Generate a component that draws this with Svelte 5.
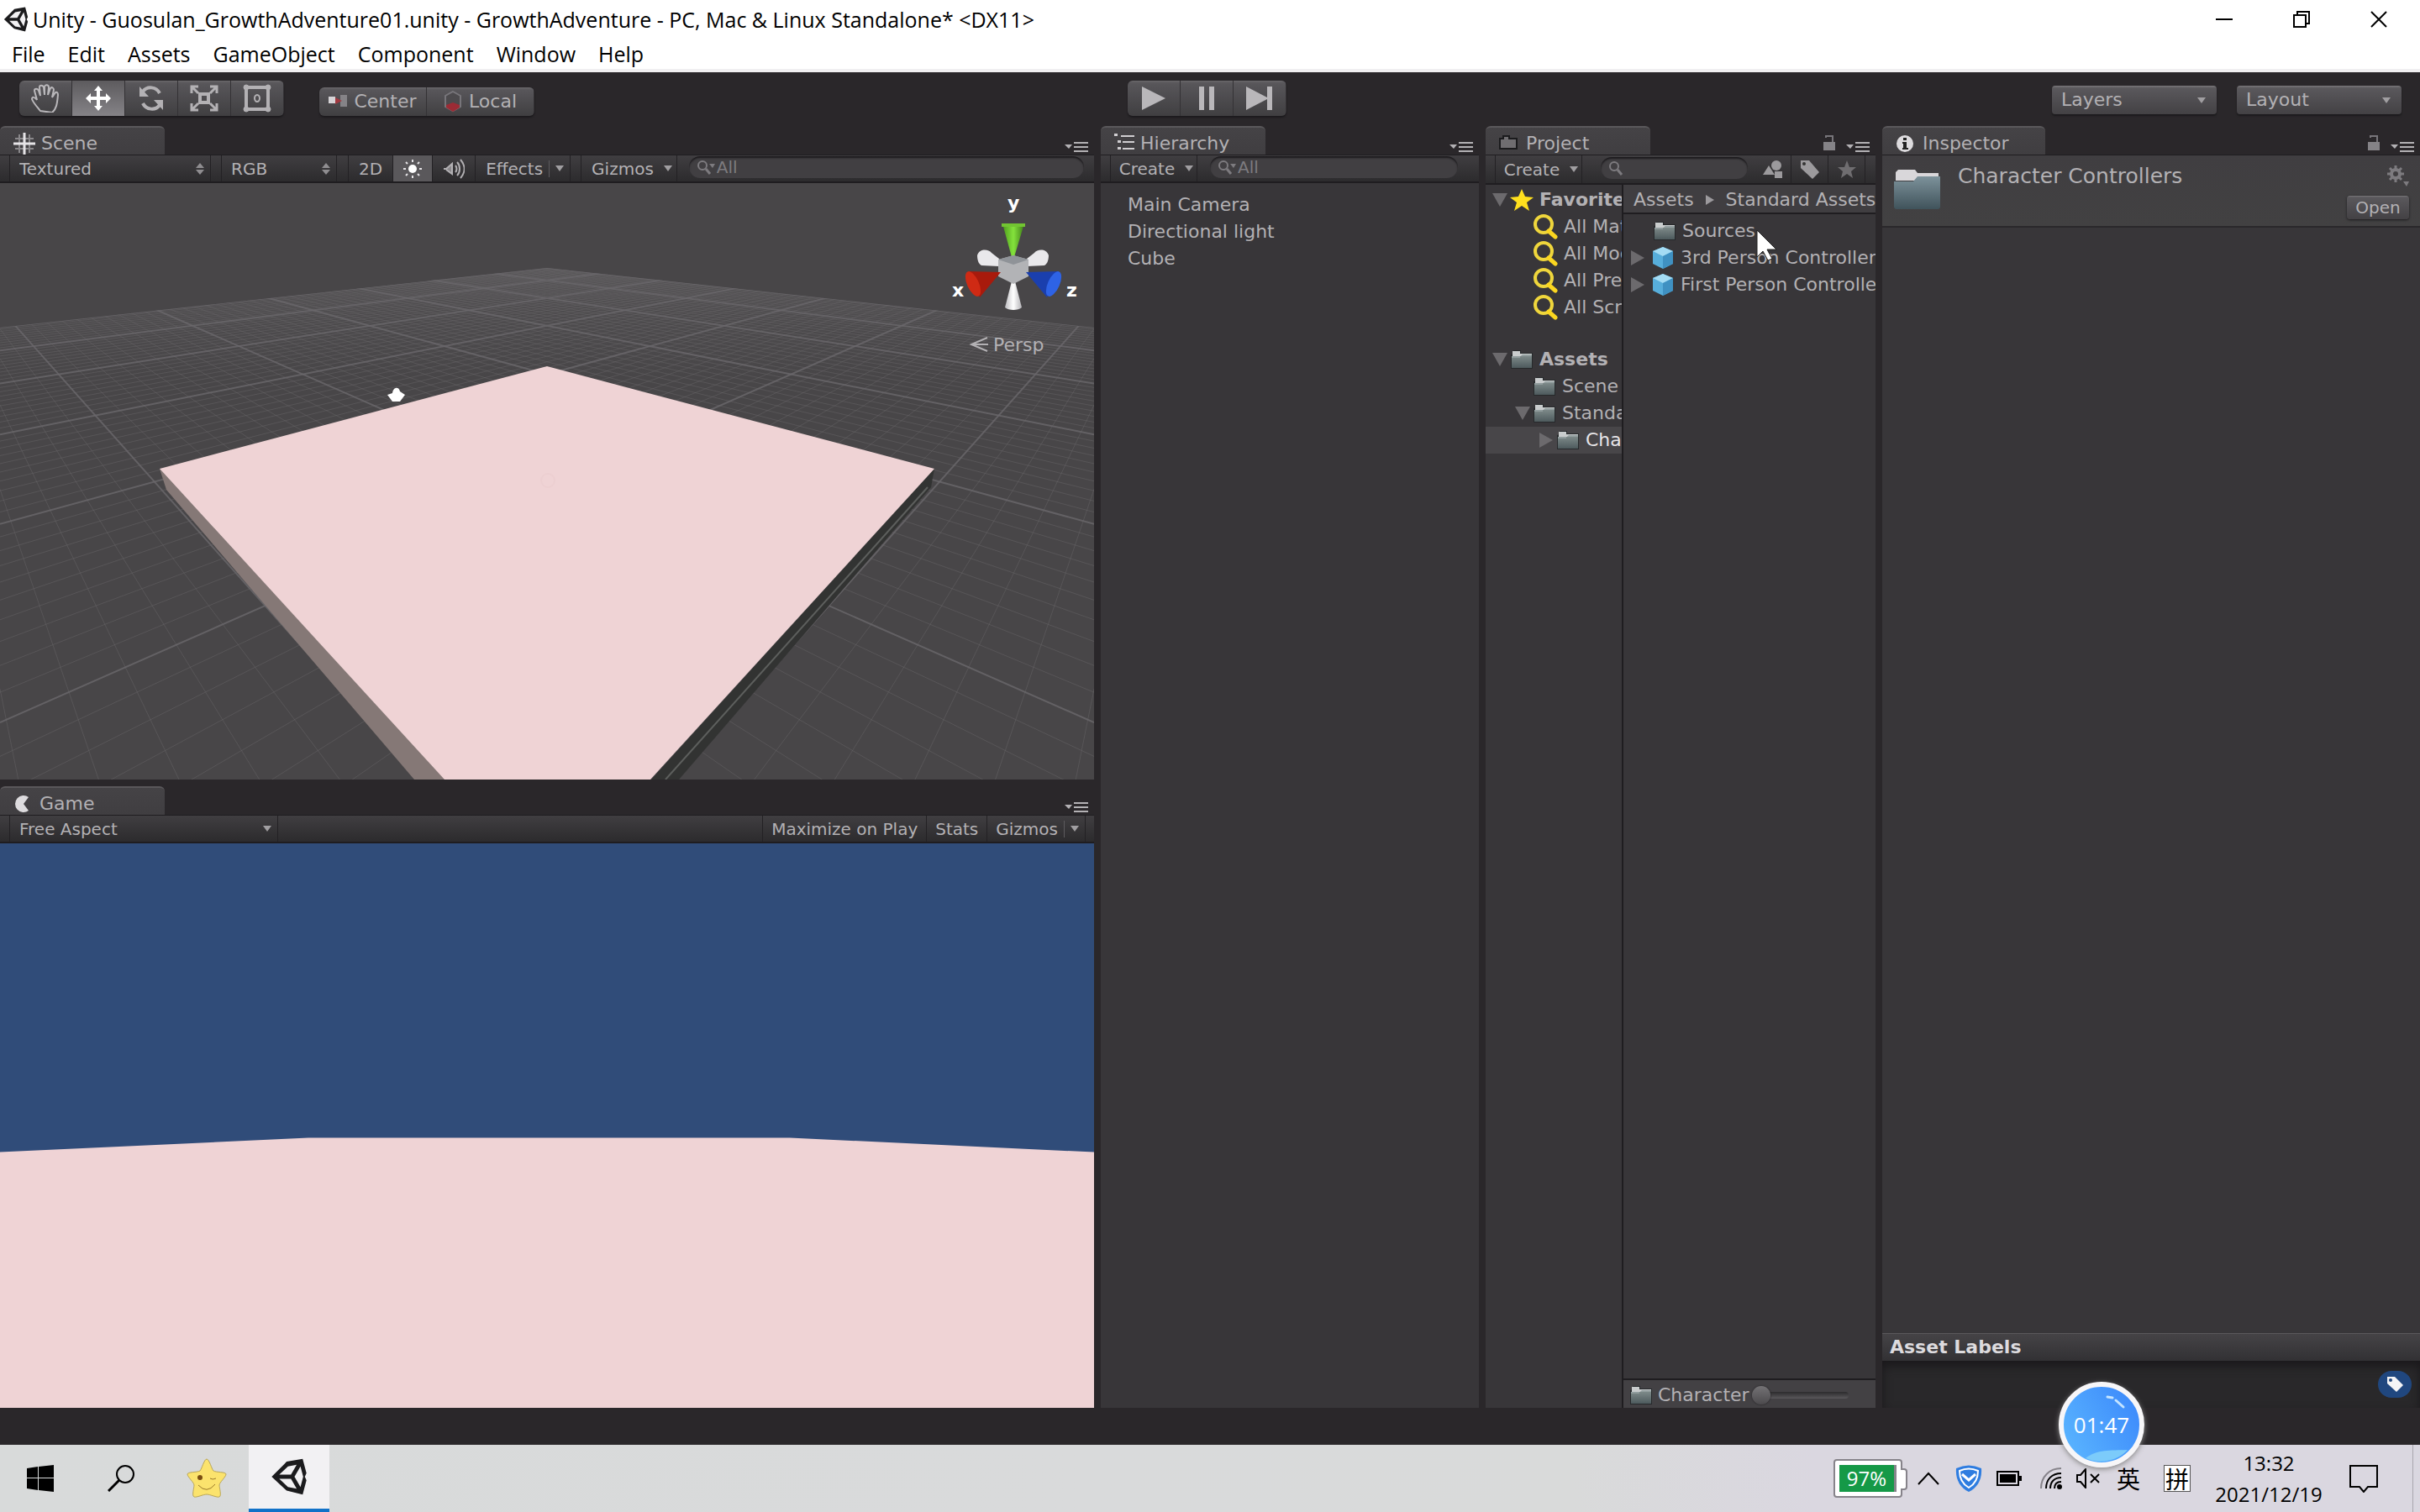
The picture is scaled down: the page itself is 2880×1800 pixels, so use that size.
<script>
  const menus = ['File', 'Edit', 'Assets', 'GameObject', 'Component', 'Window', 'Help'];
  const objects = ['Main Camera', 'Directional light', 'Cube'];
  const searches = ['All Materials', 'All Models', 'All Prefabs', 'All Scripts'];
  const prefabs = ['3rd Person Controller', 'First Person Controller'];

  // Perspective grid of the scene view: every line runs to one of two
  // vanishing points, left and right, on the same horizon
  const horizon = 17;
  const vanish = 1420;
  const width = 1302;

  function gridLine(k) {
    const r = 0.00646 - 0.000972 * k;
    const y = horizon + 1 / r;
    const slope = (horizon - y) / vanish;
    return { y1: y, y2: y + slope * width };
  }

  const bold = [0, 1, 2, 3, 4, 5, 6].map(gridLine);
  const fine = [];
  for (let i = 1; i < 66; i++) {
    if (i % 10 !== 0) fine.push({ ...gridLine(i / 10), o: 0.45 });
  }
</script>

{#snippet unityLogo(size)}
  <svg width={size} height={size} viewBox="0 0 132 136" aria-hidden="true">
    <path d="M2 68 50 20 57 12 116 2 130 55 124 68 130 81 116 134 57 119 50 113Z" fill="#1b1b1d" />
    <path d="M30 60 62 30 94 24 73 60Z M30 76 62 106 94 112 73 76Z M86 68 108 30 118 68 108 106Z" fill="#f2f1f3" />
  </svg>
{/snippet}

{#snippet folder()}
  <svg class="icon" width="28" height="24" viewBox="0 0 28 24" aria-hidden="true">
    <path d="M1 6V23H27V4H13V1H4V5Z" fill="#26292b" />
    <path d="M3 5V2h9v3h14v4H3z" fill="#c9cccd" />
    <path d="M2 8h11l2-2h11v16H2z" fill="url(#folderFill)" />
    <path d="M2 9h10M14 7h12" stroke="#a9b3b5" />
  </svg>
{/snippet}

{#snippet cube()}
  <svg class="icon" width="28" height="28" viewBox="0 0 28 28" aria-hidden="true">
    <path d="M14 1 26 6V21L14 27 2 21V6Z" fill="#57aedb" />
    <path d="M14 1 26 6 14 12 2 6Z" fill="#a4dcf4" />
    <path d="M14 12 26 6V21L14 27Z" fill="#3f91c2" />
  </svg>
{/snippet}

{#snippet magnifier()}
  <svg class="icon" width="30" height="30" viewBox="0 0 30 30" aria-hidden="true">
    <circle cx="13" cy="12" r="10" fill="none" stroke="#efd63c" stroke-width="4" />
    <path d="M19 20 27 27" stroke="#fbd620" stroke-width="5" stroke-linecap="round" />
  </svg>
{/snippet}

{#snippet fold(open)}
  <svg class="fold" width="18" height="18" viewBox="0 0 18 18" aria-hidden="true">
    <path d={open ? 'M0 1H18L9 17Z' : 'M1 0V18L17 9Z'} fill="#6c6a6d" />
  </svg>
{/snippet}

{#snippet down()}
  <svg class="arrow" width="10" height="7" viewBox="0 0 10 7" aria-hidden="true"><path d="M0 0H10L5 7Z" fill="#a09ea1" /></svg>
{/snippet}

{#snippet updown()}
  <svg class="arrow" width="10" height="14" viewBox="0 0 10 14" aria-hidden="true"><path d="M0 6H10L5 0ZM0 8H10L5 14Z" fill="#8f8d90" /></svg>
{/snippet}

{#snippet lock()}
  <svg width="16" height="20" viewBox="0 0 16 20" aria-hidden="true">
    <path d="M4 4V2H12V9" fill="none" stroke="#77757a" stroke-width="2" />
    <path d="M1 9H15V19H1Z" fill="#858387" />
  </svg>
{/snippet}

{#snippet paneMenu()}
  <button class="plain" aria-label="Panel menu">
    <svg width="28" height="12" viewBox="0 0 28 12" aria-hidden="true">
      <path d="M0 3H9L5 8ZM11 0H28V2H11ZM11 5H28V7H11ZM11 10H28V12H11Z" fill="#b3b1b4" />
    </svg>
  </button>
{/snippet}

{#snippet lens(arrow)}
  <svg class="lens" width="24" height="18" viewBox="0 0 24 18" aria-hidden="true">
    <circle cx="7" cy="7" r="5" fill="none" stroke="#7d7b7f" stroke-width="2" />
    <path d="M11 11 16 17" stroke="#7d7b7f" stroke-width="3" />
    {#if arrow}<path d="M15 5H22L19 10Z" fill="#7d7b7f" />{/if}
  </svg>
{/snippet}

<svg class="defs" width="0" height="0" aria-hidden="true">
  <defs>
    <linearGradient id="folderFill" x1="0" y1="0" x2="0" y2="1">
      <stop offset="0" stop-color="#84908f" />
      <stop offset="1" stop-color="#4d5a5d" />
    </linearGradient>
    <linearGradient id="bigFolder" x1="0" y1="0" x2="0" y2="1">
      <stop offset="0" stop-color="#7d929b" />
      <stop offset="1" stop-color="#40535b" />
    </linearGradient>
  </defs>
</svg>

<div class="screen">
  <header>
    <div class="title">
      {@render unityLogo(30)}
      <h1>Unity - Guosulan_GrowthAdventure01.unity - GrowthAdventure - PC, Mac &amp; Linux Standalone* &lt;DX11&gt;</h1>
      <div class="controls">
        <button aria-label="Minimize"><svg width="20" height="20" viewBox="0 0 20 20"><path d="M0 10H20" stroke="#000" stroke-width="2" /></svg></button>
        <button aria-label="Restore"><svg width="20" height="20" viewBox="0 0 20 20" fill="none" stroke="#000" stroke-width="2"><path d="M1 5H15V19H1ZM5 5V1H19V15H15" /></svg></button>
        <button aria-label="Close"><svg width="20" height="20" viewBox="0 0 20 20" stroke="#000" stroke-width="2"><path d="M1 1 19 19M19 1 1 19" /></svg></button>
      </div>
    </div>
    <nav>
      {#each menus as item}
        <button>{item}</button>
      {/each}
    </nav>
  </header>

  <div class="tools">
    <div class="left">
      <div class="group">
        <button aria-label="Hand">
          <svg width="34" height="34" viewBox="0 0 34 34" fill="none" stroke="#b9b7ba" stroke-width="2">
            <path d="M11 32C7 27 3 23 1 18c0-3 3-3 6 1L4 8c0-3 4-3 5 0l2 6L10 4c0-3 4-3 5 0l1 9V3c1-3 5-2 5 1l-1 9 3-8c2-2 4 0 4 2l-2 9 4-6c2-1 3 1 3 3-1 8-1 16-7 21z" />
          </svg>
        </button>
        <button class="on" aria-label="Move">
          <svg width="30" height="30" viewBox="0 0 30 30" fill="#fff">
            <path d="M15 0 20 6H17V13H24V9L30 15 24 21V17H17V24H20L15 30 10 24H13V17H6V21L0 15 6 9V13H13V6H10Z" />
          </svg>
        </button>
        <button aria-label="Rotate">
          <svg width="30" height="30" viewBox="0 0 30 30">
            <path d="M25 9C21 1 10 0 5 7M5 21C9 29 20 30 25 23" fill="none" stroke="#b3b1b4" stroke-width="4" />
            <path d="M1 1V13H12ZM29 29V17H18Z" fill="#b3b1b4" />
          </svg>
        </button>
        <button aria-label="Scale">
          <svg width="34" height="32" viewBox="0 0 34 32" fill="none" stroke="#b3b1b4">
            <path d="M12 11H22V21H12Z" stroke-width="4" />
            <path d="M2 10V2H10M24 2H32V10M32 22V30H24M10 30H2V22M2 2 10 10M32 2 24 10M32 30 24 22M2 30 10 22" stroke-width="3" />
          </svg>
        </button>
        <button aria-label="Rect">
          <svg width="34" height="34" viewBox="0 0 34 34" fill="none" stroke="#b3b1b4">
            <path d="M4 4H30V30H4Z" stroke-width="4" />
            <ellipse cx="17" cy="17" rx="3" ry="4" stroke-width="2" />
            <g fill="#b3b1b4"><circle cx="4" cy="4" r="3" /><circle cx="30" cy="4" r="3" /><circle cx="4" cy="30" r="3" /><circle cx="30" cy="30" r="3" /></g>
          </svg>
        </button>
      </div>
      <div class="group pivot">
        <button>
          <svg width="22" height="16" viewBox="0 0 22 16"><path d="M0 2H8V10H0Z" fill="#d5d3d6" /><path d="M14 0H22V14H14Z" fill="#858387" /><path d="M8 3 16 7 8 11Z" fill="#a03840" /></svg>
          Center
        </button>
        <button>
          <svg width="22" height="26" viewBox="0 0 22 26"><path d="M11 1 20 6V19L11 24 2 19V6Z" fill="#4c4a4d" stroke="#77757a" stroke-width="2" /><path d="M3 17 11 14 19 17V20L11 25 3 20Z" fill="#9b2b35" /></svg>
          Local
        </button>
      </div>
    </div>
    <div class="group play">
      <button aria-label="Play"><svg width="28" height="28" viewBox="0 0 28 28"><path d="M0 0 28 14 0 28Z" fill="#b9b7ba" /></svg></button>
      <button aria-label="Pause"><svg width="20" height="28" viewBox="0 0 20 28"><path d="M1 0H7V28H1ZM13 0H19V28H13Z" fill="#b9b7ba" /></svg></button>
      <button aria-label="Step"><svg width="32" height="28" viewBox="0 0 32 28"><path d="M0 0 25 13V0H31V28H25V15L0 28Z" fill="#b9b7ba" /></svg></button>
    </div>
    <div class="right">
      <span class="drop raised"><select aria-label="Layers"><option>Layers</option></select>{@render down()}</span>
      <span class="drop raised"><select aria-label="Layout"><option>Layout</option></select>{@render down()}</span>
    </div>
  </div>

  <main>
    <div class="views">
      <section class="panel scene">
        <div class="tabs">
          <button class="tab">
            <svg width="26" height="26" viewBox="0 0 26 26"><path d="M7 2V24M19 2V24M2 7H24M2 19H24" stroke="#8a888b" stroke-width="2" /><path d="M13 0V26M0 13H26" stroke="#e6e4e7" stroke-width="3" /></svg>
            Scene
          </button>
          {@render paneMenu()}
        </div>
        <div class="bar">
          <span class="drop textured"><select aria-label="Draw mode"><option>Textured</option></select>{@render updown()}</span>
          <span class="drop rgb"><select aria-label="Render mode"><option>RGB</option></select>{@render updown()}</span>
          <button class="cell first">2D</button>
          <button class="cell lit" aria-label="Lighting">
            <svg width="22" height="22" viewBox="0 0 22 22"><circle cx="11" cy="11" r="5" fill="#fff" /><path d="M11 0V3M11 19V22M0 11H3M19 11H22M3 3 5 5M17 17 19 19M19 3 17 5M5 17 3 19" stroke="#e6e4e7" stroke-width="2" /></svg>
          </button>
          <button class="cell" aria-label="Audio">
            <svg width="26" height="24" viewBox="0 0 26 24" fill="none" stroke="#b3b1b4" stroke-width="2"><path d="M1 12H4L11 6V18L4 13" fill="#8a888b" /><path d="M15 8C17 10 17 14 15 16M17 4C21 8 21 16 17 20M21 1C27 8 27 16 21 23" /></svg>
          </button>
          <button class="cell">Effects <i></i>{@render down()}</button>
          <button class="cell first last">Gizmos {@render down()}</button>
          <label class="search">{@render lens(true)}<input type="text" placeholder="All" aria-label="Search scene" /></label>
        </div>
        <svg class="viewport" viewBox="0 0 1302 710" preserveAspectRatio="xMidYMid slice" role="img" aria-label="Scene view">
          <defs>
            <clipPath id="ground"><path d="M651 101 1302 172V710H0V172Z" /></clipPath>
            <linearGradient id="haze" x1="0" y1="0" x2="0" y2="1"><stop offset="0" stop-color="#6a686b" stop-opacity=".3" /><stop offset="1" stop-color="#6a686b" stop-opacity="0" /></linearGradient>
            <linearGradient id="green"><stop offset="0" stop-color="#4c9a1c" /><stop offset=".5" stop-color="#84e23c" /><stop offset="1" stop-color="#3f7f18" /></linearGradient>
            <linearGradient id="pale"><stop offset="0" stop-color="#bdbcc0" /><stop offset=".5" stop-color="#fff" /><stop offset="1" stop-color="#b4b3b7" /></linearGradient>
          </defs>
          <rect width="1302" height="710" fill="#484648" />
          <g clip-path="url(#ground)" stroke="#6a686b">
            <rect y="100" width="1302" height="130" fill="url(#haze)" stroke="none" />
            {#each fine as l}
              <path d="M0 {l.y1}L1302 {l.y2}M1302 {l.y1}L0 {l.y2}" stroke-opacity={l.o} />
            {/each}
            {#each bold as l}
              <path d="M0 {l.y1}L1302 {l.y2}M1302 {l.y1}L0 {l.y2}" stroke-width="2" stroke-opacity=".8" />
            {/each}
          </g>
          <path d="M190 340 198 365 493 710H530Z" fill="#857876" />
          <path d="M1112 340 1108 362 808 710H775Z" fill="#323332" />
          <path d="M1104 362 792 710" stroke="#5d5f5d" stroke-width="2" />
          <path d="M651 218 1112 340 774 710H529L190 340Z" fill="#efd3d5" />
          <circle cx="652" cy="354" r="8" fill="#efd3d5" stroke="#eccfd1" stroke-width="2" />
          <path d="M461 252 467 250C468 242 475 242 476 248L482 252 476 260H467Z" fill="#fff" />
          <g>
            <path d="M1193 48H1219L1207 88H1204Z" fill="url(#green)" /><path d="M1192 48H1220V52H1192Z" fill="#72c532" />
            <path d="M1163 86C1166 77 1177 79 1180 83L1189 90V99L1168 98C1164 96 1163 90 1163 86Z" fill="#e9e8eb" />
            <path d="M1248 86C1245 77 1234 79 1231 83L1222 90V99L1243 98C1247 96 1248 90 1248 86Z" fill="#e9e8eb" />
            <path d="M1204 117H1208L1216 148C1212 152 1200 152 1196 148Z" fill="url(#pale)" />
            <path d="M1188 91 1206 86 1224 91V111L1206 120 1188 111Z" fill="#b2b3b6" />
            <path d="M1188 91 1206 86 1224 91 1206 97Z" fill="#8f9398" />
            <path d="M1191 106 1152 105 1166 136Z" fill="#a81a0c" /><ellipse cx="1158" cy="120" rx="7" ry="16" transform="rotate(-24 1158 120)" fill="#cf2a14" />
            <path d="M1221 106 1260 105 1246 136Z" fill="#1a3fae" /><ellipse cx="1254" cy="120" rx="7" ry="16" transform="rotate(24 1254 120)" fill="#2e63e6" />
            <path d="M1175 184 1156 192 1175 200M1156 192H1176" fill="none" stroke="#b3b1b4" stroke-width="2" />
            <g class="axis"><text x="1199" y="31">y</text><text x="1133" y="135">x</text><text x="1269" y="135">z</text></g>
            <text class="persp" x="1182" y="200">Persp</text>
          </g>
        </svg>
      </section>

      <section class="panel game">
        <div class="tabs">
          <button class="tab">
            <svg width="24" height="24" viewBox="0 0 24 24"><path d="M18 4A10 10 0 1 0 18 20L12 12Z" fill="#dddbde" /></svg>
            Game
          </button>
          {@render paneMenu()}
        </div>
        <div class="bar">
          <span class="drop aspect"><select aria-label="Aspect"><option>Free Aspect</option></select>{@render down()}</span>
          <button class="cell push">Maximize on Play</button>
          <button class="cell">Stats</button>
          <button class="cell last">Gizmos <i></i>{@render down()}</button>
        </div>
        <svg class="viewport" viewBox="0 0 1302 671" preserveAspectRatio="none" role="img" aria-label="Game view">
          <rect width="1302" height="671" fill="#304c79" />
          <path d="M0 367 367 350H940L1302 367V671H0Z" fill="#efd3d5" />
        </svg>
      </section>
    </div>

    <section class="panel">
      <div class="tabs">
        <button class="tab">
          <svg width="24" height="24" viewBox="0 0 24 24"><path d="M0 0H4V3H0ZM8 2H24V4H8ZM4 8H8V11H4ZM10 9H24V11H10ZM4 16H8V19H4ZM10 17H24V19H10Z" fill="#d0ced1" /></svg>
          Hierarchy
        </button>
        {@render paneMenu()}
      </div>
      <div class="bar">
        <button class="cell create">Create {@render down()}</button>
        <label class="search short">{@render lens(true)}<input type="text" placeholder="All" aria-label="Search hierarchy" /></label>
      </div>
      <ul class="objects">
        {#each objects as name}
          <li>{name}</li>
        {/each}
      </ul>
    </section>

    <section class="panel">
      <div class="tabs">
        <button class="tab project">
          <svg width="22" height="20" viewBox="0 0 22 20"><path d="M1 4H5V1H12V4H21V16H1Z" fill="#6f6d70" stroke="#1b1b1d" stroke-width="2" /></svg>
          Project
        </button>
        <span class="lock">{@render lock()}</span>
        {@render paneMenu()}
      </div>
      <div class="bar tall">
        <button class="cell create">Create {@render down()}</button>
        <label class="search">{@render lens(false)}<input type="text" aria-label="Search project" /></label>
        <button class="cell small" aria-label="Filter by type"><svg width="24" height="24" viewBox="0 0 24 24" fill="#9c9a9d"><circle cx="16" cy="7" r="6" /><path d="M7 7 14 18H0ZM14 14H23V22H14Z" /></svg></button>
        <button class="cell small" aria-label="Filter by label"><svg width="24" height="24" viewBox="0 0 24 24"><path d="M1 1H11L23 15 15 23 1 10Z" fill="#9c9a9d" /><circle cx="5" cy="5" r="2" fill="#333" /></svg></button>
        <button class="cell small last" aria-label="Save search"><svg width="22" height="22" viewBox="0 0 22 22"><path d="M11 0 14 8H22L16 13 18 21 11 16 4 21 6 13 0 8H8Z" fill="#6f6d70" /></svg></button>
      </div>
      <div class="browser">
        <ul class="tree">
          <li class="strong">
            {@render fold(true)}
            <svg class="icon" width="28" height="26" viewBox="0 0 28 26"><path d="M14 0 18 9 28 10 20 16 23 26 14 20 5 26 8 16 0 10 10 9Z" fill="#ffe01e" /></svg>
            Favorites
          </li>
          {#each searches as name}
            <li class="deep">{@render magnifier()}{name}</li>
          {/each}
          <li class="strong gap">{@render fold(true)}{@render folder()}Assets</li>
          <li class="deep">{@render folder()}Scene</li>
          <li class="nested">{@render fold(true)}{@render folder()}Standard Assets</li>
          <li class="nested inner current">{@render fold(false)}{@render folder()}Character Controllers</li>
        </ul>
        <div class="files">
          <div class="crumbs">Assets <svg width="10" height="12" viewBox="0 0 10 12"><path d="M0 0V12L10 6Z" fill="#9c9a9d" /></svg> Standard Assets</div>
          <ul class="tree">
            <li class="plainrow">{@render folder()}Sources</li>
            {#each prefabs as name}
              <li>{@render fold(false)}{@render cube()}{name}</li>
            {/each}
          </ul>
          <svg class="cursor" width="26" height="38" viewBox="0 0 26 38" aria-hidden="true"><path d="M1 1V33L8 26 14 37 19 35 13 24H24Z" fill="#fff" stroke="#222" /></svg>
          <div class="footer">
            {@render folder()}
            <span>Character Controllers</span>
            <input type="range" min="0" max="100" value="0" aria-label="Icon size" />
          </div>
        </div>
      </div>
    </section>

    <section class="panel inspector">
      <div class="tabs">
        <button class="tab info">
          <svg width="22" height="22" viewBox="0 0 22 22"><circle cx="11" cy="11" r="10" fill="#dddbde" /><path d="M9 4H13V7H9ZM8 9H13V16H15V18H8V16H9V11H8Z" fill="#222" /></svg>
          Inspector
        </button>
        <span class="lock">{@render lock()}</span>
        {@render paneMenu()}
      </div>
      <div class="head">
        <svg width="58" height="50" viewBox="0 0 58 50" aria-hidden="true">
          <path d="M3 14V4L6 1H26L29 5H54V14Z" fill="#d9d7da" />
          <path d="M1 15H24L29 9H56V46L54 48H3L1 46Z" fill="url(#bigFolder)" />
        </svg>
        <h2>Character Controllers</h2>
        <div class="side">
          <button class="plain" aria-label="Settings">
            <svg width="26" height="26" viewBox="0 0 26 26"><circle cx="10" cy="10" r="5" fill="none" stroke="#7d7b7f" stroke-width="4" /><path d="M10 0V4M10 16V20M0 10H4M16 10H20M3 3 6 6M14 14 17 17M17 3 14 6M6 14 3 17" stroke="#7d7b7f" stroke-width="3" /><path d="M19 19H26L23 25Z" fill="#7d7b7f" /></svg>
          </button>
          <button class="open">Open</button>
        </div>
      </div>
      <div class="fill"></div>
      <h3>Asset Labels</h3>
      <div class="labels">
        <button class="plain" aria-label="Add label">
          <svg width="40" height="32" viewBox="0 0 40 32"><rect width="40" height="32" rx="16" fill="#20477f" /><path d="M11 7H20L30 17 22 25 11 15Z" fill="#f4f4f6" /><circle cx="15" cy="11" r="2" fill="#20477f" /></svg>
        </button>
      </div>
    </section>
  </main>

  <footer>
    <button class="task" aria-label="Start"><svg width="32" height="32" viewBox="0 0 32 32"><path d="M0 4 13 2V15H0ZM14 2 32 0V15H14ZM0 16H13V30L0 28ZM14 16H32V32L14 30Z" /></svg></button>
    <button class="task" aria-label="Search"><svg width="32" height="32" viewBox="0 0 32 32" fill="none" stroke="#000" stroke-width="2"><circle cx="21" cy="11" r="10" /><path d="M14 18 1 31" stroke-width="3" /></svg></button>
    <button class="task wide" aria-label="Star">
      <svg width="48" height="48" viewBox="0 0 48 48"><path d="M24 1C27 1 30 13 32 15 35 17 47 16 47 19 47 22 39 29 39 32 39 35 42 45 39 46 36 47 28 43 24 43 20 43 12 47 9 46 6 45 9 35 9 32 9 29 1 22 1 19 1 16 13 17 16 15 18 13 21 1 24 1Z" fill="#fbe36d" stroke="#b9a659" /><circle cx="16" cy="23" r="3" fill="#7a4e12" /><path d="M28 24Q31 26 35 24M14 32Q24 43 34 31" fill="none" stroke="#9b7a2a" stroke-width="1" /></svg>
    </button>
    <button class="task active" aria-label="Unity">{@render unityLogo(44)}</button>

    <div class="tray">
      <div class="battery"><span>97%</span></div>
      <button class="t52" aria-label="Hidden icons"><svg width="26" height="16" viewBox="0 0 26 16" fill="none" stroke="#000" stroke-width="2"><path d="M1 15 13 2 25 15" /></svg></button>
      <button class="t44" aria-label="Security"><svg width="32" height="32" viewBox="0 0 32 32"><path d="M1 4Q16-3 31 4C32 18 26 27 16 32 6 27 0 18 1 4Z" fill="#2f7de0" /><path d="M5 7Q16 2 27 7C27 17 23 23 16 27 9 23 5 17 5 7Z" fill="#2f7de0" stroke="#fff" stroke-width="2" /><path d="M8 11 16 18 24 11" fill="none" stroke="#fff" stroke-width="3" /></svg></button>
      <button class="t52" aria-label="Battery"><svg width="30" height="18" viewBox="0 0 30 18"><path d="M1 1H26V17H1Z" fill="none" stroke="#000" stroke-width="2" /><path d="M4 4H23V14H4ZM27 6H30V12H27Z" /></svg></button>
      <button class="t48" aria-label="Network"><svg width="26" height="26" viewBox="0 0 26 26" fill="none" stroke="#000" stroke-width="2"><path d="M1 25C1 11 11 1 25 1" stroke="#86838a" /><path d="M7 25C7 14 14 7 25 7M12 25C12 17 17 12 25 12" /><path d="M17 25C17 20 20 17 25 17" /><circle cx="23" cy="23" r="2" fill="#000" /></svg></button>
      <button class="t40" aria-label="Volume"><svg width="28" height="24" viewBox="0 0 28 24" fill="none" stroke="#000" stroke-width="2"><path d="M1 8H5L11 1V23L5 16H1ZM17 7 27 17M27 7 17 17" /></svg></button>
      <button class="t56 cjk">英</button>
      <button class="t60 cjk"><span>拼</span></button>
      <button class="clock">13:32<br />2021/12/19</button>
      <button class="t68" aria-label="Notifications"><svg width="34" height="34" viewBox="0 0 34 34" fill="none" stroke="#000" stroke-width="2"><path d="M1 2H33V27H22L17 33 12 27H1Z" /></svg></button>
      <span class="desktop"></span>
    </div>
    <div class="timer">
      <svg width="90" height="90" viewBox="0 0 90 90" aria-hidden="true"><path d="M52 12 58 13M62 16 71 24" stroke="#c4e4ff" stroke-width="3" stroke-linecap="round" /><path d="M26 85C40 74 55 76 76 75 64 89 42 92 26 85Z" fill="#7ccbfa" /></svg>
      <span>01:47</span>
    </div>
  </footer>
</div>

<style>
  :global(body) {
    background: #2a272a;
  }

  .defs {
    position: absolute;
  }

  .screen {
    display: flex;
    flex-direction: column;
    height: 100vh;
    overflow: hidden;
    background: #2a272a;
    color: #b3b1b4;
    font: 22px/32px "DejaVu Sans", Verdana, sans-serif;
  }

  svg {
    display: block;
    flex: none;
  }

  button, select, input {
    font: inherit;
    color: inherit;
    margin: 0;
    padding: 0;
    border: 0;
    background: none;
    white-space: nowrap;
  }

  button {
    display: flex;
    align-items: center;
    justify-content: center;
    flex: none;
  }

  ul {
    list-style: none;
    margin: 0;
    padding: 0;
  }

  h1, h2, h3 {
    margin: 0;
    font-size: inherit;
    font-weight: normal;
  }

  /* window title and menu */
  header {
    background: #fff;
    color: #000;
    border-bottom: 4px solid #f0eff1;
    font: 25px/36px "Open Sans", "Noto Sans", sans-serif;
  }

  .title {
    display: flex;
    align-items: center;
    height: 46px;
    gap: 5px;
    padding-left: 4px;
  }

  .controls {
    display: flex;
    margin-left: auto;
    padding-right: 3px;
  }

  .controls button {
    width: 92px;
    height: 44px;
  }

  nav {
    display: flex;
    gap: 27px;
    height: 36px;
    padding-left: 14px;
  }

  /* main toolbar */
  .tools {
    display: grid;
    grid-template-columns: 1fr auto 1fr;
    height: 64px;
    align-items: start;
  }

  .left, .right {
    display: flex;
    align-items: flex-end;
    gap: 42px;
    padding: 10px 22px 0 23px;
  }

  .right {
    justify-content: flex-end;
    gap: 24px;
    padding-top: 16px;
  }

  .group {
    display: flex;
    height: 42px;
    border-radius: 6px;
    overflow: hidden;
    box-shadow: 0 2px 2px #1c1a1d;
  }

  .group button {
    width: 63px;
    background: linear-gradient(#6a686b, #58565a 3px, #403f41);
    border-right: 1px solid #343235;
  }

  .group .on {
    background: linear-gradient(#5d5b5e, #858387);
  }

  .pivot {
    height: 34px;
  }

  .group.pivot button {
    width: 128px;
    gap: 8px;
  }

  .play {
    margin: 10px 8px 0 0;
  }

  .drop {
    position: relative;
    display: flex;
    align-items: center;
    height: 100%;
  }

  .drop select {
    appearance: none;
    width: 100%;
    height: 100%;
    padding-left: 11px;
  }

  .drop .arrow {
    position: absolute;
    right: 7px;
  }

  .raised {
    width: 196px;
    height: 34px;
    border-radius: 4px;
    background: linear-gradient(#7a787b, #5a585c 3px, #434144);
    box-shadow: 0 2px 2px #1c1a1d;
  }

  .raised .arrow {
    right: 13px;
  }

  /* docked panels */
  main {
    flex: 1;
    min-height: 0;
    display: grid;
    grid-template-columns: 1302fr 450fr 464fr 640fr;
    gap: 8px;
  }

  .views {
    display: flex;
    flex-direction: column;
    gap: 8px;
    min-width: 0;
    min-height: 0;
  }

  .panel {
    display: flex;
    flex-direction: column;
    min-width: 0;
    min-height: 0;
    background: linear-gradient(#2a272a 34px, #383639 34px);
  }

  .scene {
    flex: 778;
  }

  .game {
    flex: 740;
  }

  .tabs {
    display: flex;
    align-items: flex-end;
    height: 34px;
    flex: none;
  }

  .tab {
    justify-content: flex-start;
    gap: 7px;
    width: 196px;
    height: 34px;
    padding: 5px 0 0 16px;
    border-top: 2px solid #5a585b;
    border-radius: 6px 6px 0 0;
    background: linear-gradient(#454346, #403e41);
    box-sizing: border-box;
  }

  .project {
    gap: 10px;
  }

  .info {
    gap: 10px;
  }

  .tabs .plain {
    height: 18px;
    margin-left: auto;
    padding-right: 7px;
  }

  .lock {
    margin-left: auto;
    padding: 0 12px 4px 0;
  }

  .tabs .lock + .plain {
    margin-left: 0;
  }

  .bar {
    display: flex;
    align-items: center;
    flex: none;
    height: 34px;
    padding-left: 11px;
    box-sizing: border-box;
    border-top: 1px solid #1f1d20;
    border-bottom: 2px solid #1f1d20;
    background: linear-gradient(#403e41, #2c2b2d);
    font-size: 20px;
  }

  .tall {
    height: 36px;
  }

  .textured {
    width: 240px;
    margin-right: 12px;
  }

  .rgb {
    width: 138px;
    margin-right: 13px;
  }

  .aspect {
    width: 320px;
  }

  .bar .drop {
    border-left: 1px solid #232124;
    border-right: 1px solid #232124;
    box-sizing: border-box;
  }

  .cell {
    height: 100%;
    padding: 0 12px;
    gap: 12px;
    border-right: 1px solid #232124;
  }

  .cell i {
    width: 1px;
    height: 20px;
    background: #5d5b5e;
  }

  .cell:has(i) {
    gap: 7px;
    padding-right: 7px;
  }

  .create, .first, .push {
    border-left: 1px solid #232124;
  }

  .first.last {
    margin-left: 12px;
    padding-right: 5px;
  }

  .create {
    width: 104px;
    padding: 0 0 0 6px;
  }

  .push {
    margin-left: auto;
  }

  .game .cell {
    padding-left: 10px;
    padding-right: 10px;
  }

  .game .last {
    padding-right: 7px;
    margin-right: 10px;
  }

  .cell.small {
    width: 44px;
    padding: 0;
  }

  .small.last {
    margin-right: 12px;
  }

  .lit {
    background: #5a585b;
  }

  .search {
    display: flex;
    align-items: center;
    flex: 1;
    min-width: 0;
    height: 26px;
    margin: 0 12px 4px 14px;
    padding-left: 9px;
    border-radius: 13px;
    background: #413f42;
    box-shadow: inset 0 2px 2px #1c1a1d;
  }

  .create + .search {
    margin-right: 8px;
    margin-left: 22px;
  }

  .create + .short {
    margin-right: 25px;
    margin-left: 15px;
  }

  .search input {
    width: 100%;
    min-width: 0;
  }

  .search input::placeholder {
    color: #7d7b7f;
    opacity: 1;
  }

  .viewport {
    width: 100%;
    flex: 1 1 0;
    min-height: 0;
  }

  .axis {
    fill: #fff;
    font: bold 22px "DejaVu Sans", sans-serif;
  }

  .persp {
    fill: #b3b1b4;
    font-size: 22px;
  }

  .objects {
    padding: 10px 32px;
  }

  /* project browser */
  .browser {
    flex: 1;
    min-height: 0;
    display: grid;
    grid-template-columns: 162fr 302fr;
  }

  .tree {
    overflow: hidden;
    padding-top: 2px;
  }

  .tree li {
    display: flex;
    align-items: center;
    height: 32px;
    padding-left: 8px;
    white-space: nowrap;
  }

  .icon {
    margin: 0 7px 0 3px;
  }

  .tree .strong {
    font-weight: bold;
  }

  .tree .gap {
    margin-top: 30px;
  }

  .tree .deep {
    padding-left: 53px;
  }

  .tree .nested {
    padding-left: 35px;
  }

  .tree .inner {
    padding-left: 63px;
  }

  .tree .current {
    background: #484649;
    color: #e6e4e7;
  }

  .files {
    position: relative;
    display: flex;
    flex-direction: column;
    min-width: 0;
    overflow: hidden;
    border-left: 2px solid #1f1d20;
  }

  .crumbs {
    display: flex;
    align-items: center;
    gap: 14px;
    height: 35px;
    padding: 2px 0 0 12px;
    box-sizing: border-box;
    border-bottom: 2px solid #1f1d20;
    background: #403e41;
    white-space: nowrap;
  }

  .files .tree {
    padding-top: 4px;
    flex: 1;
  }

  .files .tree .plainrow {
    padding-left: 28px;
  }

  .files .tree .icon {
    margin-left: 7px;
  }

  .cursor {
    position: absolute;
    left: 158px;
    top: 53px;
  }

  .footer {
    display: flex;
    align-items: center;
    height: 31px;
    padding: 2px 32px 0 4px;
    border-top: 2px solid #1f1d20;
    background: #434144;
  }

  .footer .icon {
    margin-right: 6px;
  }

  .footer span {
    width: 112px;
    overflow: hidden;
    white-space: nowrap;
    flex: none;
  }

  .footer input {
    appearance: none;
    flex: 1;
    min-width: 0;
    height: 8px;
    border-radius: 4px;
    background: linear-gradient(#2c2b2d, #5a585b);
  }

  .footer input::-webkit-slider-thumb {
    appearance: none;
    width: 22px;
    height: 22px;
    border-radius: 50%;
    background: linear-gradient(#747275, #4c4a4d);
    box-shadow: 0 0 2px #1c1a1d;
  }

  /* inspector */
  .inspector .tab {
    width: 194px;
  }

  .head {
    display: flex;
    align-items: flex-start;
    height: 87px;
    padding: 16px 13px 0;
    box-sizing: border-box;
    border-top: 1px solid #1f1d20;
    border-bottom: 2px solid #2a282b;
    background: linear-gradient(#403e41, #424142);
  }

  .head h2 {
    font-size: 25px;
    padding-left: 19px;
    margin-top: -7px;
  }

  .side {
    display: flex;
    flex-direction: column;
    align-items: flex-end;
    margin-left: auto;
    margin-top: -4px;
    gap: 10px;
  }

  .open {
    width: 74px;
    height: 28px;
    border-radius: 4px;
    background: linear-gradient(#7a787b, #5a585c 2px, #434144);
    box-shadow: 0 1px 3px #1c1a1d;
    font-size: 20px;
  }

  .fill {
    flex: 1;
  }

  h3 {
    height: 32px;
    padding-left: 9px;
    border-top: 1px solid #5a585b;
    background: linear-gradient(#454346, #323134);
    color: #dddbde;
    font-weight: bold;
  }

  .labels {
    display: flex;
    justify-content: flex-end;
    height: 56px;
    padding: 12px 10px 0;
    box-sizing: border-box;
    background: #29282a;
    box-shadow: inset 0 6px 12px #1a181b;
    align-items: flex-start;
  }

  /* taskbar */
  footer {
    position: relative;
    display: flex;
    height: 80px;
    margin-top: 44px;
    background: linear-gradient(90deg, #d8dada, #d9dadb 45%, #d9dada 65%, #dad7e0 75%);
    color: #000;
    font: 24px/37px "Open Sans", "Noto Sans", sans-serif;
  }

  .task {
    width: 96px;
    height: 80px;
  }

  .wide {
    width: 104px;
    padding-left: 4px;
  }

  .active {
    background: #f2f1f3;
    border-bottom: 4px solid #1272c8;
    box-sizing: border-box;
  }

  .tray {
    display: flex;
    align-items: center;
    margin-left: auto;
  }

  .battery {
    position: relative;
    width: 82px;
    height: 46px;
    margin-right: 5px;
    padding: 5px;
    border: 2px solid #86838a;
    border-radius: 4px;
    background: #fff;
    box-sizing: border-box;
  }

  .battery::after {
    content: "";
    position: absolute;
    left: 78px;
    top: 9px;
    width: 6px;
    height: 22px;
    border: 2px solid #86838a;
    border-left: 0;
    border-radius: 0 4px 4px 0;
    background: #fff;
  }

  .battery span {
    display: block;
    height: 32px;
    line-height: 32px;
    text-align: center;
    background: #159947;
    color: #fff;
    border-right: 3px solid #86838a;
  }

  .t40 { width: 40px; }
  .t44 { width: 44px; }
  .t48 { width: 48px; }
  .t52 { width: 52px; }
  .t56 { width: 56px; }
  .t60 { width: 60px; }
  .t68 { width: 68px; }

  .cjk {
    font: 28px/30px "Noto Sans CJK SC", sans-serif;
  }

  .cjk span {
    width: 30px;
    border: 1px solid #555;
    background: #fff;
  }

  .clock {
    display: block;
    width: 158px;
    text-align: center;
  }

  .desktop {
    width: 8px;
    height: 80px;
    margin-left: 24px;
    border-left: 1px solid #a9a6ae;
  }

  .timer {
    position: absolute;
    right: 328px;
    top: -75px;
    display: grid;
    place-items: center;
    width: 90px;
    height: 90px;
    border: 6px solid #f7f6f8;
    border-radius: 50%;
    background: linear-gradient(60deg, #5cb8ff, #3a86fb);
    color: #fff;
    font-size: 26px;
    box-shadow: 0 2px 6px #888;
  }

  .timer > * {
    grid-area: 1 / 1;
  }
</style>
